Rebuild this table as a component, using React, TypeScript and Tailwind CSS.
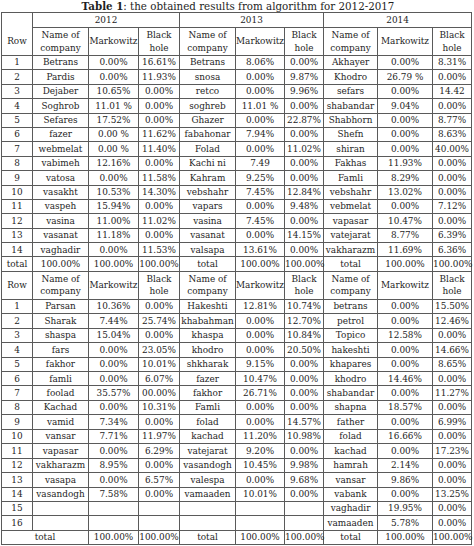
import React from "react";

const widths = [31, 56, 50, 41, 56, 49, 39, 54, 55, 39];

const block1: string[][] = [
  ["1", "Betrans", "0.00%", "16.61%", "Betrans", "8.06%", "0.00%", "Akhayer", "0.00%", "8.31%"],
  ["2", "Pardis", "0.00%", "11.93%", "snosa", "0.00%", "9.87%", "Khodro", "26.79 %", "0.00%"],
  ["3", "Dejaber", "10.65%", "0.00%", "retco", "0.00%", "9.96%", "sefars", "0.00%", "14.42"],
  ["4", "Soghrob", "11.01 %", "0.00%", "soghreb", "11.01 %", "0.00%", "shabandar", "9.04%", "0.00%"],
  ["5", "Sefares", "17.52%", "0.00%", "Ghazer", "0.00%", "22.87%", "Shabhorn", "0.00%", "8.77%"],
  ["6", "fazer", "0.00 %", "11.62%", "fabahonar", "7.94%", "0.00%", "Shefn", "0.00%", "8.63%"],
  ["7", "webmelat", "0.00 %", "11.40%", "Folad", "0.00%", "11.02%", "shiran", "0.00%", "40.00%"],
  ["8", "vabimeh", "12.16%", "0.00%", "Kachi ni", "7.49", "0.00%", "Fakhas", "11.93%", "0.00%"],
  ["9", "vatosa", "0.00%", "11.58%", "Kahram", "9.25%", "0.00%", "Famli", "8.29%", "0.00%"],
  ["10", "vasakht", "10.53%", "14.30%", "vebshahr", "7.45%", "12.84%", "vebshahr", "13.02%", "0.00%"],
  ["11", "vaspeh", "15.94%", "0.00%", "vapars", "0.00%", "9.48%", "vebmelat", "0.00%", "7.12%"],
  ["12", "vasina", "11.00%", "11.02%", "vasina", "7.45%", "0.00%", "vapasar", "10.47%", "0.00%"],
  ["13", "vasanat", "11.18%", "0.00%", "vasanat", "0.00%", "14.15%", "vatejarat", "8.77%", "6.39%"],
  ["14", "vaghadir", "0.00%", "11.53%", "valsapa", "13.61%", "0.00%", "vakharazm", "11.69%", "6.36%"],
  ["total", "100.00%", "100.00%", "100.00%", "total", "100.00%", "100.00%", "total", "100.00%", "100.00%"],
];

const block2: string[][] = [
  ["1", "Parsan", "10.36%", "0.00%", "Hakeshti", "12.81%", "10.74%", "betrans", "0.00%", "15.50%"],
  ["2", "Sharak", "7.44%", "25.74%", "khabahman", "0.00%", "12.70%", "petrol", "0.00%", "12.46%"],
  ["3", "shaspa", "15.04%", "0.00%", "khaspa", "0.00%", "10.84%", "Topico", "12.58%", "0.00%"],
  ["4", "fars", "0.00%", "23.05%", "khodro", "0.00%", "20.50%", "hakeshti", "0.00%", "14.66%"],
  ["5", "fakhor", "0.00%", "10.01%", "shkharak", "9.15%", "0.00%", "khapares", "0.00%", "8.65%"],
  ["6", "famli", "0.00%", "6.07%", "fazer", "10.47%", "0.00%", "khodro", "14.46%", "0.00%"],
  ["7", "foolad", "35.57%", "00.00%", "fakhor", "26.71%", "0.00%", "shabandar", "0.00%", "11.27%"],
  ["8", "Kachad", "0.00%", "10.31%", "Famli", "0.00%", "0.00%", "shapna", "18.57%", "0.00%"],
  ["9", "vamid", "7.34%", "0.00%", "folad", "0.00%", "14.57%", "father", "0.00%", "6.99%"],
  ["10", "vansar", "7.71%", "11.97%", "kachad", "11.20%", "10.98%", "folad", "16.66%", "0.00%"],
  ["11", "vapasar", "0.00%", "6.29%", "vatejarat", "9.20%", "0.00%", "kachad", "0.00%", "17.23%"],
  ["12", "vakharazm", "8.95%", "0.00%", "vasandogh", "10.45%", "9.98%", "hamrah", "2.14%", "0.00%"],
  ["13", "vasapa", "0.00%", "6.57%", "valespa", "0.00%", "9.68%", "vansar", "9.86%", "0.00%"],
  ["14", "vasandogh", "7.58%", "0.00%", "vamaaden", "10.01%", "0.00%", "vabank", "0.00%", "13.25%"],
  ["15", "", "", "", "", "", "", "vaghadir", "19.95%", "0.00%"],
  ["16", "", "", "", "", "", "", "vamaaden", "5.78%", "0.00%"],
];

const cell = "border border-[#5a5a5a] text-center align-middle p-0 whitespace-nowrap overflow-visible";

function HeaderCells() {
  return (
    <>
      <td className={cell}>
        Name of
        <br />
        company
      </td>
      <td className={cell}>Markowitz</td>
      <td className={cell}>
        Black
        <br />
        hole
      </td>
    </>
  );
}

export default function App() {
  return (
    <div
      className="w-[474px] h-[546px] bg-white text-[#1e1e1e] overflow-hidden"
      style={{ fontFamily: '"DejaVu Serif", "Liberation Serif", serif' }}
    >
      <div className="h-[12px] text-center text-[10.3px] leading-[12px] pl-[2px] whitespace-nowrap">
        <span className="font-bold">Table 1</span>: the obtained results from algorithm for 2012-2017
      </div>
      <table className="ml-[1px] border-collapse table-fixed text-[8.9px] leading-[12.5px]" style={{ width: 470 }}>
        <colgroup>
          {widths.map((w, i) => (
            <col key={i} style={{ width: w }} />
          ))}
        </colgroup>
        <tbody>
          <tr className="h-[15px]">
            <td className={cell + " pt-[15px]"} rowSpan={2}>
              Row
            </td>
            <td className={cell} colSpan={3}>
              2012
            </td>
            <td className={cell} colSpan={3}>
              2013
            </td>
            <td className={cell} colSpan={3}>
              2014
            </td>
          </tr>
          <tr className="h-[28px]">
            <HeaderCells />
            <HeaderCells />
            <HeaderCells />
          </tr>
          {block1.map((r, i) => (
            <tr key={i} className="h-[14.4px]">
              {r.map((c, j) => (
                <td key={j} className={cell}>
                  {c}
                </td>
              ))}
            </tr>
          ))}
          <tr className="h-[28px]">
            <td className={cell}>Row</td>
            <HeaderCells />
            <HeaderCells />
            <HeaderCells />
          </tr>
          {block2.map((r, i) => (
            <tr key={i} className="h-[14.45px]">
              {r.map((c, j) => (
                <td key={j} className={cell}>
                  {c}
                </td>
              ))}
            </tr>
          ))}
          <tr className="h-[14.45px]">
            <td className={cell} colSpan={2}>
              total
            </td>
            <td className={cell}>100.00%</td>
            <td className={cell}>100.00%</td>
            <td className={cell}>total</td>
            <td className={cell}>100.00%</td>
            <td className={cell}>100.00%</td>
            <td className={cell}>total</td>
            <td className={cell}>100.00%</td>
            <td className={cell}>100.00%</td>
          </tr>
        </tbody>
      </table>
    </div>
  );
}
